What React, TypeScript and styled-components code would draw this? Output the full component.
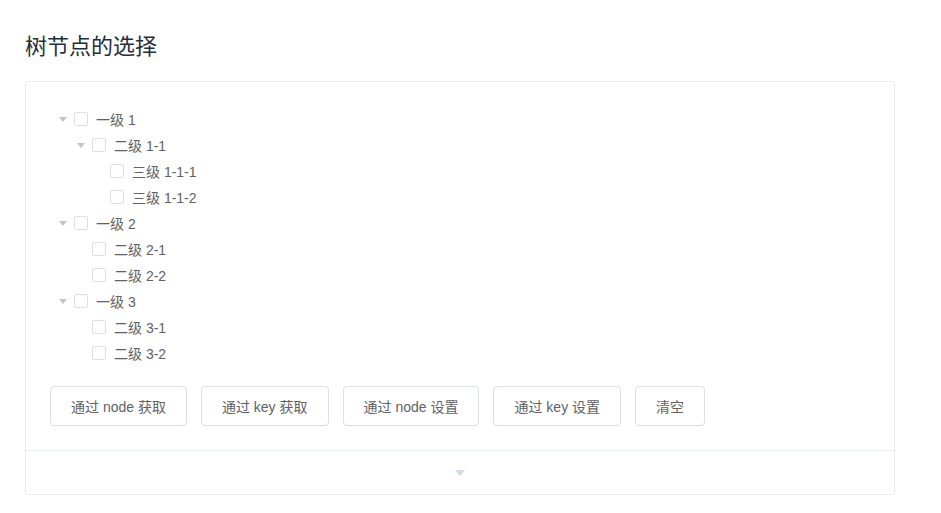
import { createGlobalStyle, styled } from 'styled-components';

interface TreeNode {
  label: string;
  children?: TreeNode[];
}

const treeData: TreeNode[] = [
  {
    label: '一级 1',
    children: [
      {
        label: '二级 1-1',
        children: [{ label: '三级 1-1-1' }, { label: '三级 1-1-2' }],
      },
    ],
  },
  {
    label: '一级 2',
    children: [{ label: '二级 2-1' }, { label: '二级 2-2' }],
  },
  {
    label: '一级 3',
    children: [{ label: '二级 3-1' }, { label: '二级 3-2' }],
  },
];

const buttons = ['通过 node 获取', '通过 key 获取', '通过 node 设置', '通过 key 设置', '清空'];

const GlobalStyle = createGlobalStyle`
  html, body {
    margin: 0;
    padding: 0;
    background: #ffffff;
    font-family: "Liberation Sans", "Noto Sans CJK SC", sans-serif;
  }
`;

const Page = styled.div`
  padding: 32px 46px 0 25px;
`;

const Title = styled.h3`
  margin: 0 0 19px;
  font-size: 22px;
  line-height: 30px;
  font-weight: 400;
  color: #1f2f3d;
`;

const Block = styled.div`
  border: 1px solid #ebebeb;
  border-radius: 3px;
`;

const Source = styled.div`
  padding: 24px;
`;

const Row = styled.div<{ $level: number }>`
  display: flex;
  align-items: center;
  height: 26px;
  padding-left: ${(p) => p.$level * 18}px;
  font-size: 14px;
  color: #606266;
`;

const Caret = styled.span<{ $visible: boolean }>`
  display: flex;
  align-items: center;
  width: 21px;
  height: 100%;
  &::after {
    content: '';
    display: ${(p) => (p.$visible ? 'block' : 'none')};
    margin-left: 9px;
    border-left: 4px solid transparent;
    border-right: 4px solid transparent;
    border-top: 5px solid #c0c4cc;
  }
`;

const Checkbox = styled.span`
  box-sizing: border-box;
  width: 14px;
  height: 14px;
  margin: 0 8px 0 3px;
  border: 1px solid #dcdfe6;
  border-radius: 2px;
  background: #ffffff;
`;

const Buttons = styled.div`
  display: flex;
  gap: 14px;
  margin-top: 20px;
`;

const Button = styled.button`
  box-sizing: border-box;
  height: 40px;
  padding: 0 20px;
  border: 1px solid #dcdfe6;
  border-radius: 4px;
  background: #ffffff;
  color: #606266;
  font-family: inherit;
  font-size: 14px;
  white-space: nowrap;
`;

const Footer = styled.div`
  display: flex;
  align-items: center;
  justify-content: center;
  height: 43px;
  border-top: 1px solid #eaeefb;
  &::after {
    content: '';
    border-left: 5px solid transparent;
    border-right: 5px solid transparent;
    border-top: 6px solid #d3dce6;
  }
`;

const renderNodes = (nodes: TreeNode[], level: number): JSX.Element[] =>
  nodes.flatMap((node) => [
    <Row key={node.label} $level={level}>
      <Caret $visible={!!node.children} />
      <Checkbox />
      <span>{node.label}</span>
    </Row>,
    ...(node.children ? renderNodes(node.children, level + 1) : []),
  ]);

const App = () => {
  return (
    <Page>
      <GlobalStyle />
      <Title>树节点的选择</Title>
      <Block>
        <Source>
          <div>{renderNodes(treeData, 0)}</div>
          <Buttons>
            {buttons.map((b) => (
              <Button key={b}>{b}</Button>
            ))}
          </Buttons>
        </Source>
        <Footer />
      </Block>
    </Page>
  );
};

export default App;
